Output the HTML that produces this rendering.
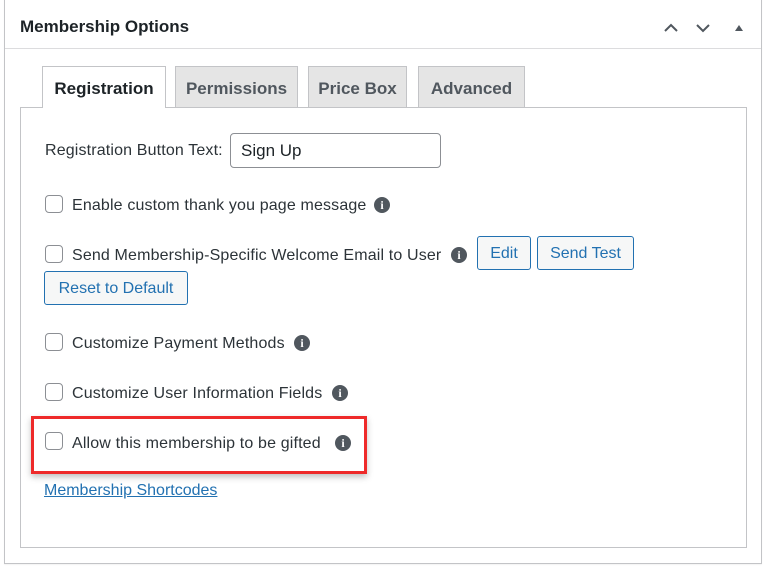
<!DOCTYPE html>
<html><head><style>
body{margin:0;width:768px;height:572px;background:#fff;font-family:"Liberation Sans",sans-serif;color:#1d2327;position:relative;overflow:hidden}
.a{position:absolute}
.outer{left:4px;top:-2px;width:756px;height:564px;border:1px solid #c3c4c7;box-shadow:0 1px 1px rgba(0,0,0,.05)}
.hline{left:5px;top:48px;width:756px;height:1px;background:#dcdcde}
.title{left:20px;top:17px;font-size:17px;font-weight:bold}
.panel{left:20px;top:107px;width:725px;height:439px;border:1px solid #c3c4c7}
.tab{top:66px;height:41px;border:1px solid #c3c4c7;border-bottom:none;background:#e5e5e5;font-size:17px;font-weight:bold;color:#50575e;text-align:center;line-height:43px;box-sizing:border-box;white-space:nowrap}
.tab.on{background:#fff;color:#1d2327;height:42px;z-index:2}
.lbl{font-size:16px;color:#2c3338;white-space:nowrap;letter-spacing:0.15px}
.cb{width:16px;height:16px;border:1px solid #8c8f94;border-radius:4px;background:#fff}
.i{width:16px;height:16px;border-radius:50%;background:#50575e;color:#fff;font-size:12px;font-weight:bold;text-align:center;line-height:16px;font-family:"Liberation Serif",serif}
.btn{height:34px;border:1px solid #2271b1;border-radius:3px;background:#f6f7f7;color:#2271b1;font-size:16px;line-height:34px;text-align:center;box-sizing:border-box;white-space:nowrap}
</style></head><body>
<div class="a outer"></div>
<div class="a hline"></div>
<div class="a title">Membership Options</div>
<svg class="a" style="left:662px;top:20px" width="90" height="16"><path d="M3 11 L9 5 L15 11" stroke="#50575e" stroke-width="2" fill="none"/><path d="M35 5 L41 11 L47 5" stroke="#50575e" stroke-width="2" fill="none"/><path d="M73 11 L77 5 L81 11Z" fill="#50575e"/></svg>
<div class="a panel"></div>
<div class="a tab on" style="left:42px;width:124px">Registration</div>
<div class="a tab" style="left:175px;width:123px">Permissions</div>
<div class="a tab" style="left:308px;width:99px">Price Box</div>
<div class="a tab" style="left:418px;width:107px">Advanced</div>

<div class="a lbl" style="left:45px;top:142px">Registration Button Text:</div>
<div class="a" style="left:230px;top:133px;width:211px;height:35px;border:1px solid #8c8f94;border-radius:4px;box-sizing:border-box;font-size:17px;line-height:34px;padding-left:10px">Sign Up</div>

<div class="a cb" style="left:45px;top:195px"></div>
<div class="a lbl" style="left:72px;top:197px">Enable custom thank you page message</div>
<div class="a i" style="left:374px;top:197px">i</div>

<div class="a cb" style="left:45px;top:245px"></div>
<div class="a lbl" style="left:72px;top:247px">Send Membership-Specific Welcome Email to User</div>
<div class="a i" style="left:451px;top:247px">i</div>
<div class="a btn" style="left:477px;top:236px;width:54px">Edit</div>
<div class="a btn" style="left:537px;top:236px;width:97px">Send Test</div>
<div class="a btn" style="left:44px;top:271px;width:144px">Reset to Default</div>

<div class="a cb" style="left:45px;top:333px"></div>
<div class="a lbl" style="left:72px;top:335px">Customize Payment Methods</div>
<div class="a i" style="left:294px;top:335px">i</div>

<div class="a cb" style="left:45px;top:383px"></div>
<div class="a lbl" style="left:72px;top:385px">Customize User Information Fields</div>
<div class="a i" style="left:332px;top:385px">i</div>

<div class="a" style="left:31px;top:416px;width:330px;height:52px;border:3px solid #ee2a2a;box-shadow:0 3px 6px rgba(0,0,0,.25)"></div>
<div class="a cb" style="left:45px;top:432px"></div>
<div class="a lbl" style="left:72px;top:435px">Allow this membership to be gifted</div>
<div class="a i" style="left:335px;top:435px">i</div>

<div class="a" style="left:44px;top:482px;font-size:16px;color:#2271b1;text-decoration:underline">Membership Shortcodes</div>
</body></html>
